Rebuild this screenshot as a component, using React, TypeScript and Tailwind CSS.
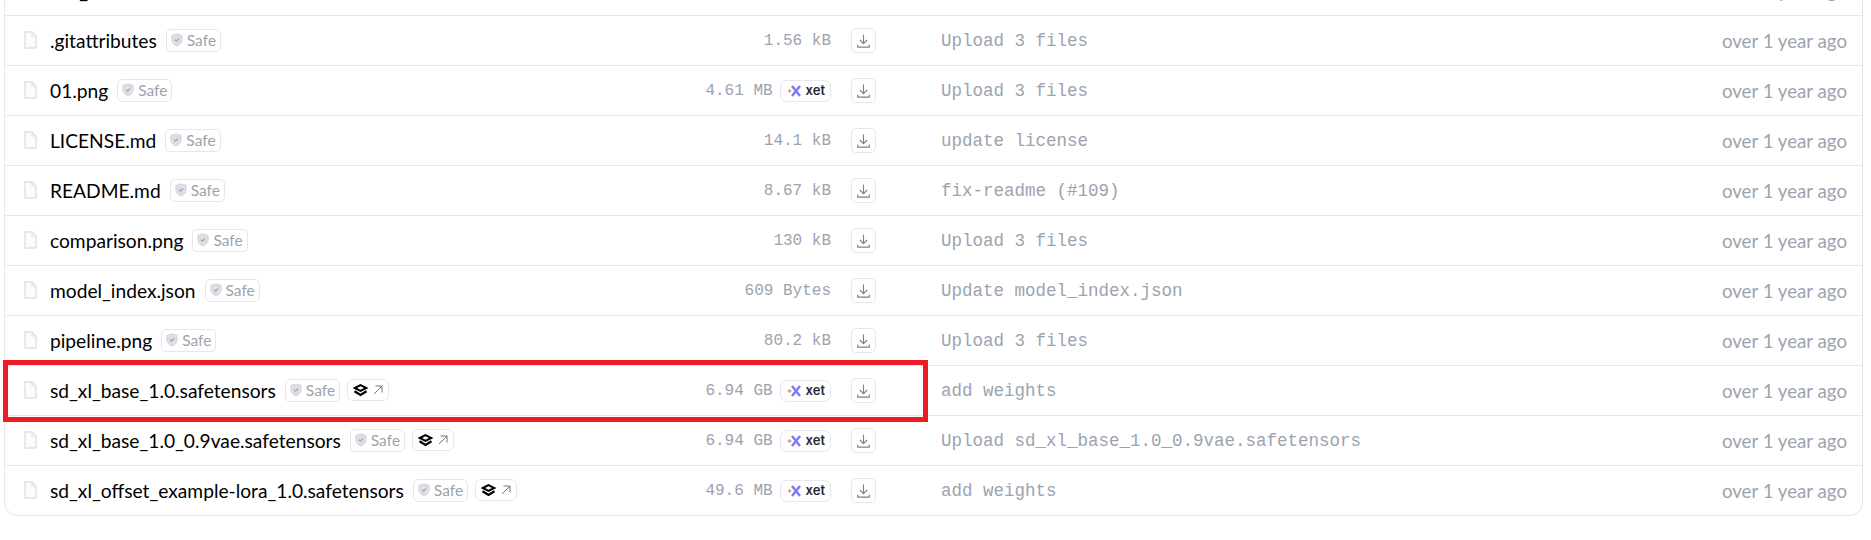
interface FileRow {
  name: string;
  size: string;
  xet?: boolean;
  lfs?: boolean;
  folder?: boolean;
  commit: string;
}

const rows: FileRow[] = [
  { name: '.gitattributes', size: '1.56 kB', commit: 'Upload 3 files' },
  { name: '01.png', size: '4.61 MB', xet: true, commit: 'Upload 3 files' },
  { name: 'LICENSE.md', size: '14.1 kB', commit: 'update license' },
  { name: 'README.md', size: '8.67 kB', commit: 'fix-readme (#109)' },
  { name: 'comparison.png', size: '130 kB', commit: 'Upload 3 files' },
  { name: 'model_index.json', size: '609 Bytes', commit: 'Update model_index.json' },
  { name: 'pipeline.png', size: '80.2 kB', commit: 'Upload 3 files' },
  { name: 'sd_xl_base_1.0.safetensors', size: '6.94 GB', xet: true, lfs: true, commit: 'add weights' },
  { name: 'sd_xl_base_1.0_0.9vae.safetensors', size: '6.94 GB', xet: true, lfs: true, commit: 'Upload sd_xl_base_1.0_0.9vae.safetensors' },
  { name: 'sd_xl_offset_example-lora_1.0.safetensors', size: '49.6 MB', xet: true, lfs: true, commit: 'add weights' },
];

const FileIcon = () => (
  <svg viewBox="0 0 13 18" className="ml-[3px] mr-[13px] h-[18px] w-[13px] shrink-0">
    <path d="M1 1h7l4 4v12H1z" fill="#fcfcfd" stroke="#dfe1e6" strokeWidth="1.4" />
    <path d="M8 1v4h4" fill="none" stroke="#dfe1e6" strokeWidth="1.2" />
  </svg>
);

const ShieldIcon = () => (
  <svg viewBox="0 0 14 16" className="h-[14px] w-[12px] shrink-0">
    <path d="M7 .8 13 2.6v5.2c0 3.4-2.6 5.8-6 7.4-3.4-1.6-6-4-6-7.4V2.6z" fill="#dcdfe5" stroke="#cfd2da" strokeWidth="1" />
    <path d="M4.6 7.6 6.4 9.3l3-2.9" fill="none" stroke="#6b7280" strokeWidth="1.1" />
  </svg>
);

const XetLogo = () => (
  <svg viewBox="0 0 14 12" className="h-[12px] w-[14px] shrink-0">
    <path d="M5 1 13 11M13 1 5 11" fill="none" stroke="#7b7bfa" strokeWidth="2.5" />
    <path d="M2.6 3.4 3.4 5.2 5.2 6 3.4 6.8 2.6 8.6 1.8 6.8 0 6 1.8 5.2z" fill="#fb8a3c" />
  </svg>
);

const LfsIcon = () => (
  <svg viewBox="0 0 15 13" className="h-[13px] w-[15px] shrink-0">
    <path d="M7.5 1.1 13.3 4 7.5 6.9 1.7 4z" fill="none" stroke="#000" strokeWidth="2" />
    <path d="M1.5 7.2 7.5 11 13.5 7.2" fill="none" stroke="#000" strokeWidth="2.2" />
  </svg>
);

const ArrowIcon = () => (
  <svg viewBox="0 0 10 10" className="h-[10px] w-[10px] shrink-0">
    <path d="M1 9 9 1M2.5 1H9v6.5" fill="none" stroke="#6b7280" strokeWidth="1" />
  </svg>
);

const DownloadIcon = () => (
  <svg viewBox="0 0 13 14" className="h-[14px] w-[13px]">
    <path d="M6.5 .5v9M2.8 6l3.7 3.7L10.2 6" fill="none" stroke="#7b8290" strokeWidth="1.1" />
    <path d="M.7 10.5v2.6h11.6v-2.6" fill="none" stroke="#7b8290" strokeWidth="1.1" />
  </svg>
);

const Row = ({ row, last }: { row: FileRow; last?: boolean }) => (
  <li className={`flex items-center pl-[16px] pr-[15px] ${last ? 'h-[49px]' : 'h-[50px] border-b border-[#e5e7eb]'}`}>
    <div className="flex w-[639px] min-w-0 items-center">
      {!row.folder && <FileIcon />}
      <span className={`pt-[1px] font-['Lato',sans-serif] text-[19.2px] text-black ${row.folder ? 'ml-[29px]' : ''}`}>{row.name}</span>
      {!row.folder && (
        <span className="ml-[9px] flex h-[23px] items-center gap-[4px] rounded-[5px] border border-[#e5e7eb] px-[4px] font-['Lato',sans-serif] text-[15.5px] text-[#9ca3af]">
          <ShieldIcon />
          Safe
        </span>
      )}
      {row.lfs && (
        <span className="ml-[7px] flex h-[22px] items-center gap-[5px] rounded-[6px] border border-[#e5e7eb] px-[5px]">
          <LfsIcon />
          <ArrowIcon />
        </span>
      )}
    </div>
    <div className="flex w-[171px] items-center justify-end gap-[7px] font-['Liberation_Mono',monospace] text-[16px] text-[#9ca3af]">
      <span className="pt-[1px]">{row.size}</span>
      {row.xet && (
        <span className="flex h-[22px] items-center gap-[5px] rounded-[7px] border border-[#e5e7eb] pl-[6px] pr-[5px] font-['Inter',sans-serif] text-[13px] font-semibold text-[#1f2937]">
          <XetLogo />
          xet
        </span>
      )}
    </div>
    <div className="ml-[20px] w-[25px] shrink-0">
      {!row.folder && (
        <div className="flex h-[25px] w-[25px] items-center justify-center rounded-[5px] border border-[#e5e7eb]">
          <DownloadIcon />
        </div>
      )}
    </div>
    <div className="ml-[65px] flex-1 pt-[2px] font-['Liberation_Mono',monospace] text-[17.5px] text-[#9ca3af]">{row.commit}</div>
    <div className="pt-[1px] font-['Lato',sans-serif] text-[18.7px] text-[#9ca3af]">over 1 year ago</div>
  </li>
);

export default function App() {
  return (
    <div className="relative h-[540px] w-[1871px] overflow-hidden bg-white">
      <ul className="mx-[4px] -mt-[34px] w-[1859px] rounded-b-[14px] border-x border-b border-[#e5e7eb]">
        <Row row={{ name: 'vae_encoder', size: '', folder: true, commit: '' }} />
        {rows.map((row, i) => (
          <Row key={row.name} row={row} last={i === rows.length - 1} />
        ))}
      </ul>
      <div className="absolute left-[3px] top-[360px] h-[62px] w-[925px] border-[5px] border-[#ed1c24]" />
    </div>
  );
}
